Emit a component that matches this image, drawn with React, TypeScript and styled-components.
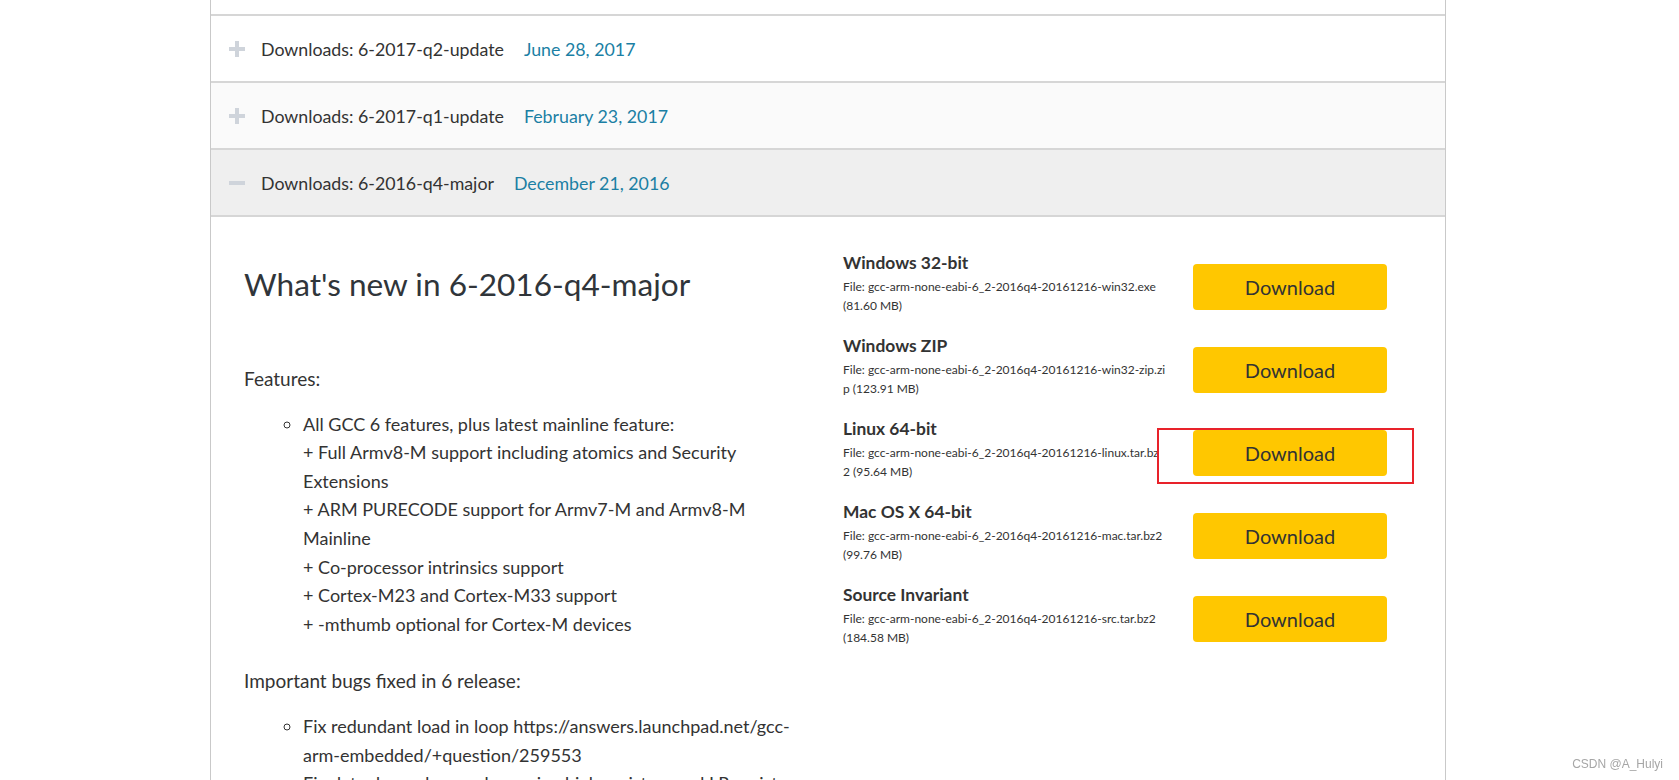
import React from 'react';
import styled, {createGlobalStyle, css} from "styled-components";

const GlobalStyle = createGlobalStyle`
  body {
    margin: 0;
    background: #fff;
    font-family: Lato, "Open Sans", sans-serif;
    color: #333;
  }
`

type Release = {
    label: string
    date: string
    bg: string
    open?: boolean
}

const releases: Release[] = [
    {label: "Downloads: 6-2017-q2-update", date: "June 28, 2017", bg: "#ffffff"},
    {label: "Downloads: 6-2017-q1-update", date: "February 23, 2017", bg: "#fafafa"},
    {label: "Downloads: 6-2016-q4-major", date: "December 21, 2016", bg: "#efefef", open: true},
]

type DownloadItem = {
    title: string
    file: string
    size: string
    marked?: boolean
}

const downloads: DownloadItem[] = [
    {title: "Windows 32-bit", file: "gcc-arm-none-eabi-6_2-2016q4-20161216-win32.exe", size: "(81.60 MB)"},
    {title: "Windows ZIP", file: "gcc-arm-none-eabi-6_2-2016q4-20161216-win32-zip.zip", size: "(123.91 MB)"},
    {title: "Linux 64-bit", file: "gcc-arm-none-eabi-6_2-2016q4-20161216-linux.tar.bz2", size: "(95.64 MB)", marked: true},
    {title: "Mac OS X 64-bit", file: "gcc-arm-none-eabi-6_2-2016q4-20161216-mac.tar.bz2", size: "(99.76 MB)"},
    {title: "Source Invariant", file: "gcc-arm-none-eabi-6_2-2016q4-20161216-src.tar.bz2", size: "(184.58 MB)"},
]

const features = [
    "+ Full Armv8-M support including atomics and Security Extensions",
    "+ ARM PURECODE support for Armv7-M and Armv8-M Mainline",
    "+ Co-processor intrinsics support",
    "+ Cortex-M23 and Cortex-M33 support",
    "+ -mthumb optional for Cortex-M devices",
]

function ToggleIcon(props: { open?: boolean }) {
    return (
        <IconBox viewBox="0 0 16 16">
            <rect x="0" y="6" width="16" height="4" fill="#cfd4db"/>
            {!props.open && <rect x="6" y="0" width="4" height="16" fill="#cfd4db"/>}
        </IconBox>
    )
}

function App() {
    return (
        <Page>
            <GlobalStyle/>
            <Panel>
                <PrevTail/>
                {releases.map(r => (
                    <React.Fragment key={r.label}>
                        <RowHeader bg={r.bg}>
                            <ToggleIcon open={r.open}/>
                            <RowLabel>{r.label}</RowLabel>
                            <RowDate>{r.date}</RowDate>
                        </RowHeader>
                        {r.open && (
                            <Body>
                                <Notes>
                                    <NotesTitle>What's new in 6-2016-q4-major</NotesTitle>
                                    <Para>Features:</Para>
                                    <List>
                                        <li>
                                            All GCC 6 features, plus latest mainline feature:
                                            {features.map(f => <Line key={f}>{f}</Line>)}
                                        </li>
                                    </List>
                                    <Para>Important bugs fixed in 6 release:</Para>
                                    <List>
                                        <li>Fix redundant load in loop https://answers.launchpad.net/gcc-arm-embedded/+question/259553</li>
                                        <li>Fix data dependency when using high registers and LR register</li>
                                    </List>
                                </Notes>
                                <Files>
                                    {downloads.map(d => (
                                        <FileRow key={d.title}>
                                            <FileInfo>
                                                <FileTitle>{d.title}</FileTitle>
                                                <FileMeta>
                                                    <FileName>File: {d.file}</FileName> <FileSize>{d.size}</FileSize>
                                                </FileMeta>
                                            </FileInfo>
                                            <ButtonSlot marked={d.marked}>
                                                <DownloadButton>Download</DownloadButton>
                                            </ButtonSlot>
                                        </FileRow>
                                    ))}
                                </Files>
                            </Body>
                        )}
                    </React.Fragment>
                ))}
            </Panel>
            <Watermark>CSDN @A_Hulyi</Watermark>
        </Page>
    );
}

export default App;

const Page = styled.div`
  height: 780px;
  overflow: hidden;
  padding-left: 210px;
`
const Panel = styled.div`
  width: 1234px;
  border-left: 1px solid #c9c9c9;
  border-right: 1px solid #c9c9c9;
  background: #fff;
`
const PrevTail = styled.div`
  height: 14px;
`
const RowHeader = styled.div<{ bg: string }>`
  height: 65px;
  border-top: 2px solid #d6d6d6;
  background: ${props => props.bg};
  display: flex;
  align-items: center;
  padding-left: 18px;
  font-size: 17.8px;
`
const IconBox = styled.svg`
  width: 16px;
  height: 16px;
  margin-right: 16px;
  flex-shrink: 0;
`
const RowLabel = styled.span`
  color: #333;
`
const RowDate = styled.span`
  color: #1b7fa4;
  margin-left: 20px;
`
const Body = styled.div`
  border-top: 2px solid #d6d6d6;
  display: flex;
  padding: 35px 0 0 33px;
`
const Notes = styled.div`
  width: 560px;
  font-size: 18px;
  line-height: 28.6px;
  color: #333;
`
const NotesTitle = styled.h2`
  font-size: 31.6px;
  font-weight: 400;
  line-height: 44px;
  margin: 10px 0 0;
  color: #30353a;
`
const Para = styled.p`
  margin: 0;
  font-size: 19px;
  ${NotesTitle} + & {
    margin-top: 59px;
  }
`
const List = styled.ul`
  list-style: circle;
  margin: 16px 0 29px;
  padding-left: 59px;
`
const Line = styled.span`
  display: block;
`
const Files = styled.div`
  margin-left: 39px;
  display: flex;
  flex-direction: column;
  gap: 20px;
`
const FileRow = styled.div`
  display: flex;
  align-items: flex-start;
`
const FileInfo = styled.div`
  width: 322.2px;
`
const FileTitle = styled.div`
  font-size: 17.4px;
  font-weight: 700;
  line-height: 22px;
  color: #333;
`
const FileMeta = styled.div`
  margin-top: 3px;
  font-size: 12px;
  line-height: 19px;
  color: #333;
`
const FileName = styled.span`
  word-break: break-all;
`
const FileSize = styled.span`
  white-space: nowrap;
`
const ButtonSlot = styled.div<{ marked?: boolean }>`
  position: relative;
  margin: 12px 0 0 27.8px;
  ${props => props.marked && css`
    &::after {
      content: "";
      position: absolute;
      left: -36px;
      right: -27px;
      top: -2px;
      bottom: -8px;
      border: 2px solid #e8222a;
      pointer-events: none;
    }
  `}
`
const DownloadButton = styled.button`
  width: 194px;
  height: 46px;
  border: none;
  border-radius: 4px;
  background: #ffc700;
  color: #333;
  font-family: Lato, sans-serif;
  font-size: 20px;
  cursor: pointer;
`
const Watermark = styled.div`
  position: fixed;
  right: 16px;
  bottom: 9px;
  font-family: "Liberation Sans", Arial, sans-serif;
  font-size: 12px;
  color: #a6a6a6;
`
